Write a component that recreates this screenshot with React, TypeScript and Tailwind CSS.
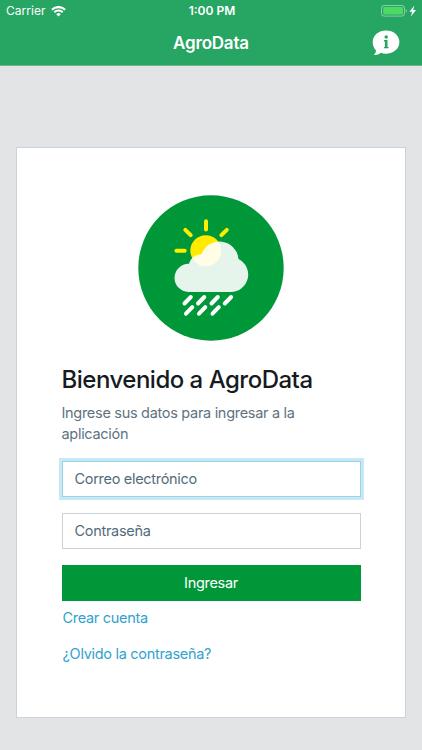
import React from 'react';

const drops = [
  { x: 46.5, y: 108.5 },
  { x: 60, y: 108.5 },
  { x: 73.5, y: 108.5 },
  { x: 86.8, y: 108.5 },
  { x: 48, y: 118.7 },
  { x: 61, y: 118.7 },
  { x: 74.5, y: 118.7 },
];

const links = ['Crear cuenta', '¿Olvido la contraseña?'];

const WeatherLogo: React.FC = () => (
  <svg className="size-[146px]" viewBox="0 0 146 146" fill="none">
    <circle cx="73" cy="73" r="72.7" fill="#009739" />
    <g stroke="#ffed00" strokeWidth="4" strokeLinecap="round">
      <path d="M68 26.2v8.3M88.8 34.8l-5.4 5.4M47.3 34.8l5.4 5.4M38.4 55.7h8.3" />
    </g>
    <circle cx="67.8" cy="55.7" r="15.5" fill="#ffea00" />
    <path
      d="M50.3 97A14.1 14.1 0 0 1 51 68.8A12.7 12.7 0 0 1 63.5 59.2A19.1 19.1 0 0 1 100.5 64A17.4 17.4 0 0 1 92.7 97Z"
      fill="#fff"
      fillOpacity="0.9"
    />
    <g stroke="#fff" strokeWidth="4" strokeLinecap="round">
      {drops.map((drop, i) => (
        <path key={i} d={`M${drop.x} ${drop.y}l6.3-6.5`} />
      ))}
    </g>
  </svg>
);

const StatusBar: React.FC = () => (
  <div className="grid grid-cols-3 items-center h-[22px] pl-1.5 pr-1 text-xs">
    <div className="flex items-center gap-[5px]">
      <span className="tracking-[0.05px]">Carrier</span>
      <svg className="w-[15px] h-[11px]" viewBox="0 0 15 11" fill="none" stroke="#fff">
        <path d="M.9 3.8a9.3 9.3 0 0 1 13.2 0" strokeWidth="2.2" />
        <path d="M3.3 6.3a6 6 0 0 1 8.4 0" strokeWidth="2" />
        <path d="M7.5 10.5L5.2 8.2a3.3 3.3 0 0 1 4.6 0z" fill="#fff" stroke="none" />
      </svg>
    </div>
    <span className="text-center font-semibold">1:00 PM</span>
    <div className="flex items-center justify-end">
      <svg className="w-[38px] h-3" viewBox="0 0 38 12">
        <rect x="1.5" y="0.5" width="23" height="10.6" rx="2.6" fill="none" stroke="#fff" strokeOpacity="0.45" />
        <rect x="3.2" y="2" width="19.8" height="7.6" rx="1.2" fill="#4cd964" />
        <path d="M25.8 4v3.8c1.4-.6 1.4-3.2 0-3.8z" fill="#fff" fillOpacity="0.5" />
        <path d="M34.3 .5l-4.9 6.2h2.7l-1.1 4.7 5-6.3h-2.8z" fill="#fff" />
      </svg>
    </div>
  </div>
);

const Header: React.FC = () => (
  <header className="h-[66px] bg-[#27a562] border-b border-[#64b98c] text-white">
    <StatusBar />
    <div className="grid grid-cols-3 items-center h-[43px] px-[22px]">
      <h1 className="col-start-2 text-center text-[17px] font-semibold tracking-[-0.2px]">AgroData</h1>
      <button className="justify-self-end -mt-0.5" aria-label="Información">
        <svg className="w-7 h-[26px]" viewBox="0 0 28 26">
          <path
            d="M14 .5C6.500 .5.700 5.400.700 12c0 3.500 1.300 6.300 3.300 8.500-.1 1.700-.8 3.200-2.300 4.400 3 .2 5.400-.6 7-2.200 1.700.7 3.400 1 5.300 1 7.500 0 13.400-5 13.400-11.700S21.500.5 14 .5z"
            fill="#fff"
          />
          <circle cx="14.2" cy="7" r="1.7" fill="#27a562" />
          <path d="M12 10h3.500v6.900h1.100v1.300h-4.700v-1.300h1v-5.500h-.9z" fill="#27a562" />
        </svg>
      </button>
    </div>
  </header>
);

export default function App() {
  return (
    <div className="flex flex-col h-[750px] bg-[#e3e4e6] font-['Inter',sans-serif]">
      <Header />
      <main className="flex flex-col mt-[81px] mx-4 h-[571px] px-[44.5px] pt-[47px] bg-white border border-[#cad3db]">
        <div className="flex justify-center">
          <WeatherLogo />
        </div>
        <h2 className="mt-[21px] text-2xl leading-9 font-medium tracking-[-0.5px] text-[#151b1e] whitespace-nowrap">
          Bienvenido a AgroData
        </h2>
        <p className="mt-1 text-[14.5px] leading-[21px] tracking-[-0.3px] text-[#5f7381]">
          Ingrese sus datos para ingresar a la
          <br />
          aplicación
        </p>
        <form className="mt-[17px] flex flex-col tracking-[-0.3px]">
          <input
            className="h-9 px-3 pb-0.5 border border-[#94d3ea] ring-3 ring-[#c7e8f4] text-[14.5px] outline-none placeholder:text-[#536c79]"
            placeholder="Correo electrónico"
          />
          <input
            className="mt-4 h-9 px-3 pb-0.5 border border-[#cbd2da] text-[14.5px] outline-none placeholder:text-[#536c79]"
            placeholder="Contraseña"
            type="password"
          />
          <button type="button" className="mt-4 h-9 bg-[#009739] text-[14.5px] text-white">
            Ingresar
          </button>
        </form>
        <nav className="flex flex-col items-start pl-px text-[14.5px] tracking-[-0.3px] text-[#31a2cf]">
          {links.map((link) => (
            <a key={link} href="#" className="h-9 leading-[34px]">
              {link}
            </a>
          ))}
        </nav>
      </main>
    </div>
  );
}
